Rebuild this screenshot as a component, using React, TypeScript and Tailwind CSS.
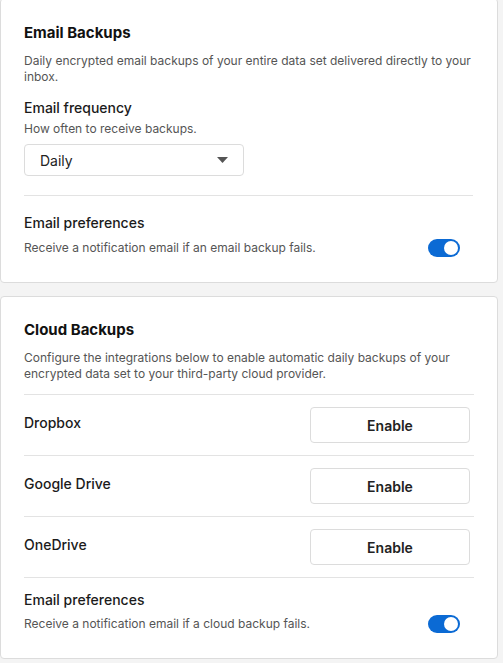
import React from "react";

function Toggle() {
  return (
    <div className="w-[32px] h-[18px] rounded-full bg-[#0b6ad4] flex items-center justify-end pr-[2px] shrink-0">
      <div className="w-[14px] h-[14px] rounded-full bg-white" />
    </div>
  );
}

function Row({ name }: { name: string }) {
  return (
    <div className="flex justify-between items-start pt-[12px] pb-[12px] border-b border-[#e3e3e3]">
      <div className="text-[14px] leading-[20px] font-medium text-[#1b1b1b] pt-[6px]">{name}</div>
      <button className="w-[160px] h-[36px] border border-[#dcdcdc] rounded-[4px] bg-white text-[14px] font-semibold text-[#222] mr-[4px]">
        Enable
      </button>
    </div>
  );
}

export default function App() {
  return (
    <div
      className="bg-[#f4f4f4] w-[503px] h-[663px] overflow-hidden pr-[5px]"
      style={{ fontFamily: "Inter, 'Noto Sans', sans-serif" }}
    >
      <div className="-mt-[2px] bg-white border border-[#dcdcdc] rounded-[4px] px-[23px] pt-[24px] pb-[25px]">
        <div className="text-[15px] leading-[20px] font-bold text-[#111]">Email Backups</div>
        <div className="mt-[10px] text-[12px] leading-[16px] text-[#555]">
          Daily encrypted email backups of your entire data set delivered directly to your inbox.
        </div>
        <div className="mt-[13px] text-[14px] leading-[20px] font-medium text-[#1b1b1b]">Email frequency</div>
        <div className="mt-[3px] text-[12px] leading-[16px] text-[#555]">How often to receive backups.</div>
        <div className="mt-[7px] w-[220px] h-[32px] border border-[#dcdcdc] rounded-[4px] flex items-center justify-between pl-[15px] pr-[15px]">
          <span className="text-[14px] text-[#222]">Daily</span>
          <svg width="11" height="6" viewBox="0 0 11 6">
            <path d="M0 0 L11 0 L5.5 6 Z" fill="#555" />
          </svg>
        </div>
        <div className="mt-[19px] border-t border-[#e3e3e3] mr-[1px]" />
        <div className="mt-[17px] text-[14px] leading-[20px] font-medium text-[#1b1b1b]">Email preferences</div>
        <div className="mt-[6px] flex items-center justify-between pr-[14px]">
          <span className="text-[12px] leading-[16px] text-[#555]">Receive a notification email if an email backup fails.</span>
          <Toggle />
        </div>
      </div>

      <div className="mt-[13px] bg-white border border-[#dcdcdc] rounded-[4px] px-[23px] pt-[23px] pb-[25px]">
        <div className="text-[15px] leading-[20px] font-bold text-[#111]">Cloud Backups</div>
        <div className="mt-[10px] pb-[12px] border-b border-[#e3e3e3] text-[12px] leading-[16px] text-[#555] pr-[20px]">
          Configure the integrations below to enable automatic daily backups of your encrypted data set to your third-party cloud provider.
        </div>
        <Row name="Dropbox" />
        <Row name="Google Drive" />
        <Row name="OneDrive" />
        <div className="mt-[12px] text-[14px] leading-[20px] font-medium text-[#1b1b1b]">Email preferences</div>
        <div className="mt-[5px] flex items-center justify-between pr-[14px]">
          <span className="text-[12px] leading-[16px] text-[#555]">Receive a notification email if a cloud backup fails.</span>
          <Toggle />
        </div>
      </div>
    </div>
  );
}
